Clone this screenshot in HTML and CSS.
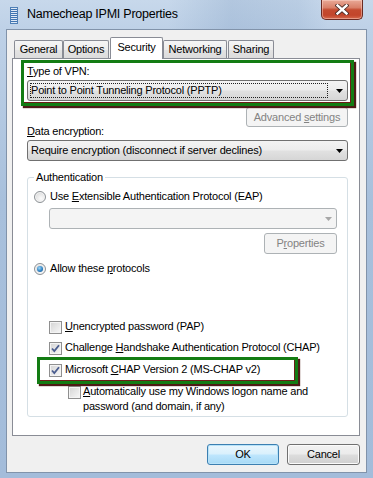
FILE: index.html
```html
<!DOCTYPE html>
<html>
<head>
<meta charset="utf-8">
<link rel="stylesheet" href="styles.css">
</head>
<body>
<div class="window">
  <div class="titlebar">
    <svg class="app-icon" width="8" height="17" viewBox="0 0 8 17">
      <rect x="0" y="0" width="8" height="17" fill="#dfe9f5"/>
      <rect x="0.5" y="0.5" width="7" height="16" fill="none" stroke="#4f7fb5"/>
      <rect x="1" y="2" width="6" height="1" fill="#3f73b0"/>
      <rect x="1" y="4" width="6" height="1" fill="#3f73b0"/>
      <rect x="1" y="6" width="6" height="1" fill="#3f73b0"/>
      <rect x="1" y="8" width="6" height="1" fill="#3f73b0"/>
      <rect x="1" y="10" width="6" height="1" fill="#3f73b0"/>
      <rect x="1" y="12" width="6" height="1" fill="#3f73b0"/>
      <rect x="1" y="14" width="6" height="1" fill="#3f73b0"/>
    </svg>
    <span class="title">Namecheap IPMI Properties</span>
    <div class="close">
      <svg width="14" height="11" viewBox="0 0 14 11">
        <path d="M2.5 1.5 L11.5 9.5 M11.5 1.5 L2.5 9.5" stroke="#4a2a25" stroke-width="4.2" stroke-linecap="square"/>
        <path d="M2.5 1.5 L11.5 9.5 M11.5 1.5 L2.5 9.5" stroke="#ffffff" stroke-width="2.4" stroke-linecap="square"/>
      </svg>
    </div>
  </div>
  <div class="client">
    <div class="tabs">
      <div class="tab t-general">General</div>
      <div class="tab t-options">Options</div>
      <div class="tab t-security sel">Security</div>
      <div class="tab t-networking">Networking</div>
      <div class="tab t-sharing">Sharing</div>
    </div>
    <div class="panel">
      <div class="label"><u>T</u>ype of VPN:</div>
      <div class="combo">
        <span class="val focus">Point to Point Tunneling Protocol (PPTP)</span>
        <svg class="arrow" width="7" height="4" viewBox="0 0 7 4"><path d="M0 0 H7 L3.5 4 Z" fill="#000"/></svg>
      </div>
      <div class="btn-row">
        <div class="btn disabled adv"><span>Advanced <u>s</u>ettings</span></div>
      </div>
      <div class="label label-data"><u>D</u>ata encryption:</div>
      <div class="combo">
        <span class="val">Require encryption (disconnect if server declines)</span>
        <svg class="arrow" width="7" height="4" viewBox="0 0 7 4"><path d="M0 0 H7 L3.5 4 Z" fill="#000"/></svg>
      </div>
      <fieldset class="group">
        <legend>Authentication</legend>
        <div class="radio-row">
          <span class="radio"></span>
          <span>Use <u>E</u>xtensible Authentication Protocol (EAP)</span>
        </div>
        <div class="combo dcombo">
          <span class="val"></span>
          <svg class="arrow" width="7" height="4" viewBox="0 0 7 4"><path d="M0 0 H7 L3.5 4 Z" fill="#a7a7a7"/></svg>
        </div>
        <div class="btn-row btn-row-props">
          <div class="btn disabled props"><span>P<u>r</u>operties</span></div>
        </div>
        <div class="radio-row allow">
          <span class="radio checked"></span>
          <span>Allow these <u>p</u>rotocols</span>
        </div>
        <div class="check-row pap">
          <span class="check"></span>
          <span><u>U</u>nencrypted password (PAP)</span>
        </div>
        <div class="check-row chap">
          <span class="check checked">
            <svg width="11" height="11" viewBox="0 0 11 11"><path d="M2 5.5 L4.3 8 L9 2.2" fill="none" stroke="#4a5d8f" stroke-width="1.8"/></svg>
          </span>
          <span>Challenge <u>H</u>andshake Authentication Protocol (CHAP)</span>
        </div>
        <div class="check-row mschap">
          <span class="check checked">
            <svg width="11" height="11" viewBox="0 0 11 11"><path d="M2 5.5 L4.3 8 L9 2.2" fill="none" stroke="#4a5d8f" stroke-width="1.8"/></svg>
          </span>
          <span>Microsoft <u>C</u>HAP Version 2 (MS-CHAP v2)</span>
        </div>
        <div class="check-row auto">
          <span class="check"></span>
          <span><u>A</u>utomatically use my Windows logon name and<br>password (and domain, if any)</span>
        </div>
      </fieldset>
      <div class="hl hl-vpn"></div>
      <div class="hl hl-mschap"></div>
    </div>
    <div class="footer">
      <div class="btn ok"><span>OK</span></div>
      <div class="btn cancel"><span>Cancel</span></div>
    </div>
  </div>
</div>
</body>
</html>
```
FILE: styles.css
```css
* { box-sizing: border-box; }
html, body { margin: 0; padding: 0; }
body {
  width: 373px;
  height: 478px;
  overflow: hidden;
  font-family: "Liberation Sans", Arial, sans-serif;
  font-size: 11px;
  letter-spacing: -0.2px;
  color: #000;
  background: #a9c1dd;
}
u { text-decoration: underline; text-underline-offset: 1px; }

.window {
  width: 373px;
  height: 478px;
  display: flex;
  flex-direction: column;
  padding: 0 6px 5px;
  background: linear-gradient(180deg, #c7d8eb 0px, #bed1e7 30px, #a8c0dc 200px, #a3bcda 478px);
}

.titlebar {
  height: 29px;
  display: flex;
  align-items: flex-start;
  margin: 0 -6px;
  padding: 0 6px;
  background: linear-gradient(90deg, rgba(255,255,255,0) 45%, rgba(70,110,160,0.16) 62%, rgba(70,110,160,0.10) 80%, rgba(255,255,255,0) 88%);
}
.app-icon { margin: 7px 0 0 4px; flex: none; }
.title {
  margin: 6px 0 0 9px;
  font-size: 12.5px;
  letter-spacing: -0.25px;
  line-height: 17px;
  color: #000;
}
.close {
  margin-left: auto;
  margin-right: 4px;
  width: 42px;
  height: 20px;
  border: 1px solid #6a2a22;
  border-top: none;
  border-radius: 0 0 5px 5px;
  background: linear-gradient(180deg, #e9a997 0%, #d98069 40%, #c44a2f 52%, #c2452b 80%, #d6694d 100%);
  box-shadow: inset 0 0 0 1px rgba(255,220,210,0.45);
  display: flex;
  align-items: center;
  justify-content: center;
}

.client {
  flex: 1;
  background: #f0f0f0;
  border: 1px solid #8193aa;
  padding: 7px 6px 0 5px;
  display: flex;
  flex-direction: column;
}

.tabs {
  display: flex;
  align-items: flex-end;
  height: 22px;
  margin-bottom: -1px;
  position: relative;
  z-index: 1;
}
.tab {
  height: 18px;
  margin-bottom: 1px;
  border: 1px solid #898c95;
  border-bottom: none;
  border-radius: 2px 2px 0 0;
  background: linear-gradient(180deg, #f5f5f5 0%, #ededed 50%, #e3e3e3 51%, #dcdcdc 100%);
  text-align: center;
  line-height: 16px;
  white-space: nowrap;
}
.tab.sel {
  height: 22px;
  margin-bottom: 0;
  background: #fff;
  padding-top: 1px;
}
.t-general { width: 49px; margin-left: 2px; }
.t-options { width: 46px; }
.t-security { width: 53px; margin-left: 1px; }
.t-networking { width: 64px; }
.t-sharing { width: 46px; margin-left: 1px; }

.panel {
  height: 378px;
  border: 1px solid #898c95;
  background: #fff;
  position: relative;
  padding: 5px 11px 0 14px;
}

.label { height: 15px; line-height: 15px; }
.label-data { margin-top: -3px; }

.combo {
  height: 21px;
  margin-top: 1px;
  border: 1px solid #707070;
  border-radius: 3px;
  background: linear-gradient(180deg, #f3f3f3 0%, #ececec 48%, #e1e1e1 52%, #d6d6d6 100%);
  display: flex;
  align-items: center;
  padding: 0 4px 0 2px;
}
.val {
  width: 298px;
  height: 15px;
  line-height: 13px;
  border: 1px dotted transparent;
  white-space: nowrap;
  overflow: hidden;
}
.val.focus { border-color: #202020; }
.arrow { margin-left: auto; flex: none; }

.btn-row { display: flex; justify-content: flex-end; margin-top: 6px; }
.btn {
  height: 21px;
  border: 1px solid #707070;
  border-radius: 3px;
  display: flex;
  align-items: center;
  justify-content: center;
  line-height: 15px;
  white-space: nowrap;
}
.btn.disabled {
  border-color: #adb2b5;
  background: #f4f4f4;
  color: #838383;
}
.adv { width: 102px; height: 20px; }

.group {
  margin: 9px 0 0;
  padding: 4px 10px 2px 0;
  border: 1px solid #d5dfe5;
  border-radius: 3px;
  min-width: 0;
}
.group legend {
  margin-left: 6px;
  padding: 0 2px;
  line-height: 15px;
}

.radio-row {
  display: flex;
  align-items: center;
  height: 15px;
  line-height: 15px;
  padding-left: 6px;
}
.radio-row.allow { margin-top: 7px; }
.radio {
  width: 12px;
  height: 12px;
  margin-right: 4px;
  border-radius: 50%;
  border: 1px solid #8d9296;
  background: radial-gradient(circle at 60% 65%, #fbfbfb 0%, #e9e9e9 45%, #cfd0d2 100%);
  box-shadow: inset 0 0 0 1px #f5f5f5;
  flex: none;
  position: relative;
}
.radio.checked::after {
  content: "";
  position: absolute;
  left: 2px;
  top: 2px;
  width: 6px;
  height: 6px;
  border-radius: 50%;
  background: radial-gradient(circle at 40% 35%, #9fd6f7 0%, #2f83c4 55%, #134a86 100%);
}

.dcombo {
  margin: 4px 0 0 21px;
  border-color: #adb2b5;
  background: #f4f4f4;
}
.btn-row-props { margin-top: 4px; }
.props { width: 73px; }

.check-row {
  display: flex;
  align-items: flex-start;
  height: 15px;
  line-height: 15px;
  padding-left: 21px;
}
.check-row.pap { margin-top: 43px; }
.check-row.chap { margin-top: 6px; }
.check-row.mschap { margin-top: 7px; }
.check-row.auto { margin-top: 7px; padding-left: 40px; height: 30px; }
.check {
  width: 13px;
  height: 13px;
  margin: 2px 3px 0 0;
  border: 1px solid #8f8f8f;
  background: linear-gradient(135deg, #d3d3d3 0%, #e8e8e8 55%, #f8f8f8 100%);
  box-shadow: inset 0 0 0 1px #f4f4f4;
  flex: none;
  display: flex;
  align-items: center;
  justify-content: center;
}
.check-row.auto .check { margin-right: 2px; }

.hl {
  position: absolute;
  border: 3px solid #137c13;
  box-shadow: inset -1px -1px 0 #6a1d17, 2px 2px 1px #4e1b16;
}
.hl-vpn { left: 8px; top: 1px; width: 333px; height: 46px; }
.hl-mschap { left: 24px; top: 298px; width: 261px; height: 27px; }

.footer {
  display: flex;
  justify-content: flex-end;
  gap: 8px;
  margin-top: 8px;
}
.ok {
  width: 72px;
  border-color: #3c7fb1;
  background: linear-gradient(180deg, #eaf6fd 0%, #d9f0fc 48%, #bee6fd 52%, #a7d9f5 100%);
  box-shadow: inset 0 0 0 1px #b8e3f9;
}
.cancel {
  width: 73px;
  background: linear-gradient(180deg, #f2f2f2 0%, #ebebeb 48%, #dddddd 52%, #cfcfcf 100%);
  box-shadow: inset 0 0 0 1px #fbfbfb;
}
```
